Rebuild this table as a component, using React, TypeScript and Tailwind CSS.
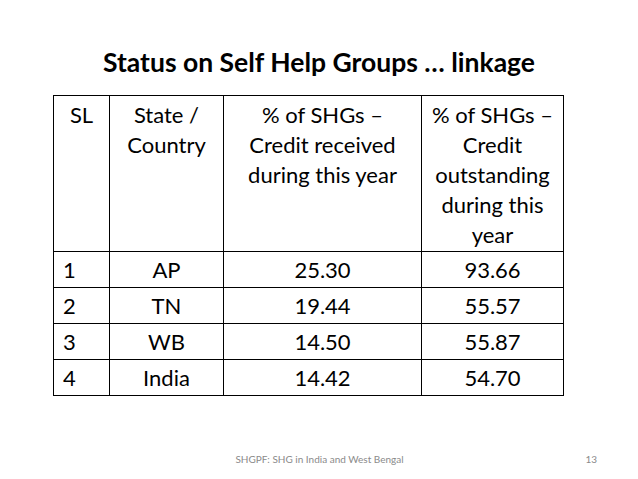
const rows = [
  { sl: '1', state: 'AP', received: '25.30', outstanding: '93.66' },
  { sl: '2', state: 'TN', received: '19.44', outstanding: '55.57' },
  { sl: '3', state: 'WB', received: '14.50', outstanding: '55.87' },
  { sl: '4', state: 'India', received: '14.42', outstanding: '54.70' },
];

export default function App() {
  return (
    <div className="relative w-[638px] h-[479px] bg-white text-black font-['Lato','Open_Sans',sans-serif]">
      <div className="flex flex-col">
        <h1 className="pt-[46px] h-[77px] text-center text-[26.5px] leading-[32px] font-bold">
          Status on Self Help Groups … linkage
        </h1>

        <table className="mt-[18px] ml-[53px] w-[510px] table-fixed border-collapse text-[22px]">
          <colgroup>
            <col className="w-[56px]" />
            <col className="w-[114px]" />
            <col className="w-[198px]" />
            <col className="w-[142px]" />
          </colgroup>
          <thead>
            <tr className="h-[156px] align-top leading-[30px]">
              <th className="border border-black pt-[4px] font-normal text-center">SL</th>
              <th className="border border-black pt-[4px] font-normal text-center">
                State /<br />Country
              </th>
              <th className="border border-black pt-[4px] font-normal text-center">
                % of SHGs –<br />Credit received<br />during this year
              </th>
              <th className="border border-black pt-[4px] font-normal text-center">
                % of SHGs –<br />Credit<br />outstanding<br />during this<br />year
              </th>
            </tr>
          </thead>
          <tbody>
            {rows.map((r) => (
              <tr key={r.sl} className="h-[36px] leading-[30px]">
                <td className="border border-black pl-[9px]">{r.sl}</td>
                <td className="border border-black text-center">{r.state}</td>
                <td className="border border-black text-center">{r.received}</td>
                <td className="border border-black text-center">{r.outstanding}</td>
              </tr>
            ))}
          </tbody>
        </table>

        <div className="mt-[56px] flex items-center h-[14px] text-[10px] text-[#8a8a8a]">
          <span className="flex-1 text-center pl-[1px]">SHGPF: SHG in India and West Bengal</span>
          <span className="absolute right-[41px]">13</span>
        </div>
      </div>
    </div>
  );
}
